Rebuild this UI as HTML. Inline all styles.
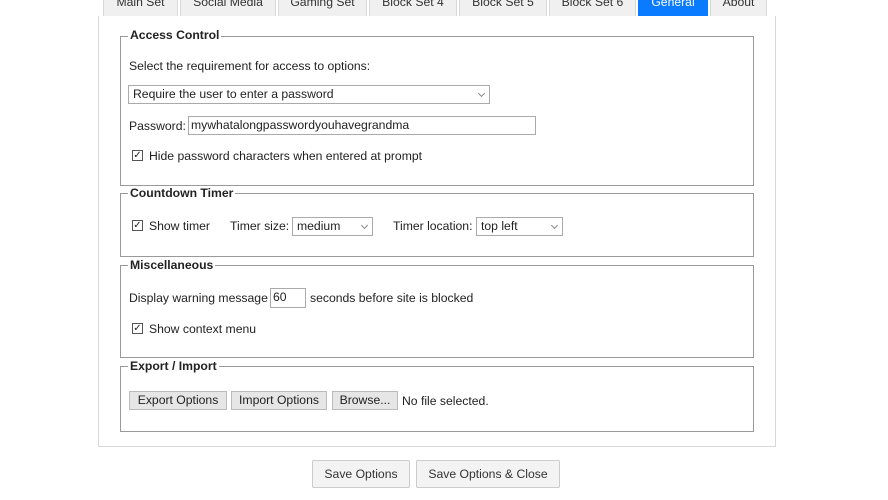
<!DOCTYPE html>
<html><head><style>
*{box-sizing:border-box;margin:0;padding:0}
body{width:888px;height:500px;background:#fff;font-family:"Liberation Sans",Arial,sans-serif;font-size:12.2px;color:#222;position:relative;overflow:hidden}
.a{position:absolute;white-space:nowrap}
.tab{position:absolute;top:-6px;height:22px;background:#f0f0f0;border:1px solid #d8d8d8;border-bottom:none;text-align:center;line-height:14px;color:#333}
.tab.on{background:#0a7bff;color:#fff;border-color:#0a7bff}
.panel{position:absolute;left:98px;top:16px;width:678px;height:431px;border:1px solid #d8d8d8;border-top:none}
.fs{position:absolute;left:120px;width:634px;border:1px solid #999}
.lg{position:absolute;left:128px;background:#fff;padding:0 2px;font-weight:bold;color:#222}
.sel{position:absolute;border:1px solid #aaa;background:#fff;height:19px;line-height:17px;padding-left:4px;white-space:nowrap}
.sel:after{content:"";position:absolute;right:5px;top:5px;width:4px;height:4px;border-right:1px solid #888;border-bottom:1px solid #888;transform:rotate(45deg)}
.sel.nc:after{display:none}
.cb{position:absolute;width:11px;height:11px;border:1px solid #555;font-size:10px;line-height:9px;text-align:center}
.btn{position:absolute;background:#e6e6e6;border:1px solid #bbb;text-align:center;height:19px;line-height:17px;white-space:nowrap}
.b2{position:absolute;background:#f3f3f3;border:1px solid #ccc;text-align:center;height:28px;line-height:26px;border-radius:2px;color:#333;white-space:nowrap}
</style></head><body>
<div class="tab" style="left:103px;width:75px">Main Set</div>
<div class="tab" style="left:180px;width:96px">Social Media</div>
<div class="tab" style="left:278px;width:89px">Gaming Set</div>
<div class="tab" style="left:369px;width:88px">Block Set 4</div>
<div class="tab" style="left:459px;width:88px">Block Set 5</div>
<div class="tab" style="left:549px;width:87px">Block Set 6</div>
<div class="tab on" style="left:638px;width:70px">General</div>
<div class="tab" style="left:710px;width:57px">About</div>
<div class="panel"></div>

<div class="fs" style="top:36px;height:150px"></div>
<div class="lg" style="top:28px">Access Control</div>
<div class="a" style="left:129px;top:59px">Select the requirement for access to options:</div>
<div class="sel" style="left:128px;top:85px;width:362px">Require the user to enter a password</div>
<div class="a" style="left:129px;top:119px">Password:</div>
<div class="sel nc" style="left:188px;top:116px;width:348px;padding-left:2px">mywhatalongpasswordyouhavegrandma</div>
<div class="cb" style="left:132px;top:150px">✓</div>
<div class="a" style="left:149px;top:149px">Hide password characters when entered at prompt</div>

<div class="fs" style="top:193px;height:64px"></div>
<div class="lg" style="top:186px">Countdown Timer</div>
<div class="cb" style="left:132px;top:220px">✓</div>
<div class="a" style="left:149px;top:219px">Show timer</div>
<div class="a" style="left:230px;top:219px">Timer size:</div>
<div class="sel" style="left:292px;top:217px;width:81px">medium</div>
<div class="a" style="left:393px;top:219px">Timer location:</div>
<div class="sel" style="left:476px;top:217px;width:87px">top left</div>

<div class="fs" style="top:265px;height:93px"></div>
<div class="lg" style="top:258px">Miscellaneous</div>
<div class="a" style="left:129px;top:291px">Display warning message</div>
<div class="sel nc" style="left:270px;top:288px;width:36px;height:20px;padding-left:2px">60</div>
<div class="a" style="left:310px;top:291px">seconds before site is blocked</div>
<div class="cb" style="left:132px;top:323px">✓</div>
<div class="a" style="left:149px;top:322px">Show context menu</div>

<div class="fs" style="top:366px;height:66px"></div>
<div class="lg" style="top:359px">Export / Import</div>
<div class="btn" style="left:129px;top:391px;width:98px">Export Options</div>
<div class="btn" style="left:231px;top:391px;width:96px">Import Options</div>
<div class="btn" style="left:332px;top:391px;width:66px">Browse...</div>
<div class="a" style="left:402px;top:394px">No file selected.</div>

<div class="b2" style="left:312px;top:460px;width:98px">Save Options</div>
<div class="b2" style="left:416px;top:460px;width:144px">Save Options &amp; Close</div>
</body></html>
